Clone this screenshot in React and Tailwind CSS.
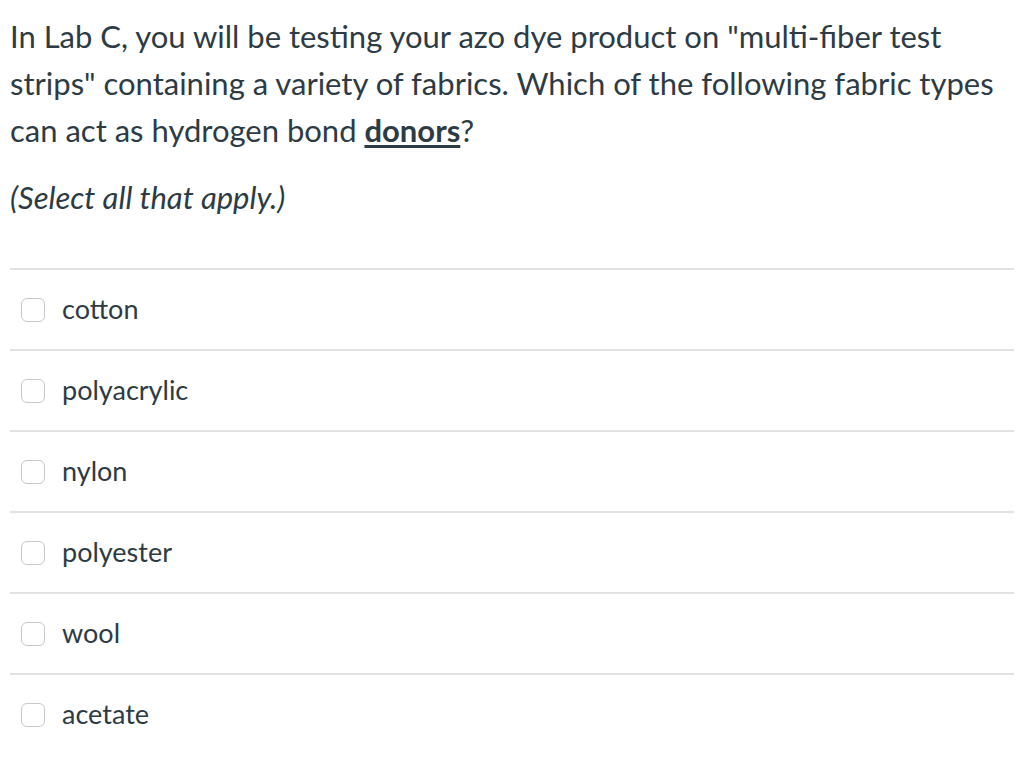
import React from "react";

const answers = ["cotton", "polyacrylic", "nylon", "polyester", "wool", "acetate"];

export default function App() {
  return (
    <div
      className="min-h-[759px] bg-white text-[#2d3b45] px-[10px]"
      style={{ fontFamily: "Lato, 'Open Sans', sans-serif" }}
    >
      <p className="pt-[13px] text-[31px] leading-[47px]">
        In Lab C, you will be testing your azo dye product on "multi-fiber test
        strips" containing a variety of fabrics. Which of the following fabric
        types can act as hydrogen bond{" "}
        <span className="font-bold underline underline-offset-[3px]">donors</span>?
      </p>
      <p className="mt-[20px] text-[31px] leading-[47px] italic">
        (Select all that apply.)
      </p>

      <div className="mt-[47px]">
        {answers.map((a) => (
          <div
            key={a}
            className="flex items-center h-[81px] border-t-2 border-[#e2e2e2]"
          >
            <span className="ml-[11px] w-[24px] h-[24px] rounded-[6px] border-[1.5px] border-[#c4c8cc] bg-white shrink-0" />
            <span className="ml-[17px] text-[27px] leading-none -mt-[3px]">{a}</span>
          </div>
        ))}
      </div>
    </div>
  );
}
